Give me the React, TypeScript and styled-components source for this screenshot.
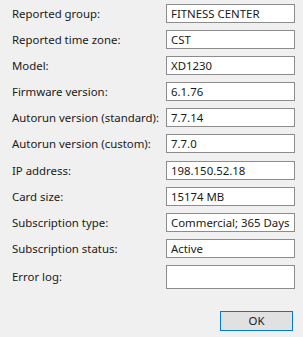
import { Fragment } from 'react';
import styled, { createGlobalStyle } from 'styled-components';

const GlobalStyle = createGlobalStyle`
  html, body {
    margin: 0;
    padding: 0;
    background: #f0f0f0;
  }
  body {
    font-family: 'Noto Sans', 'Open Sans', sans-serif;
    font-size: 11.4px;
    color: #000;
  }
`;

const Dialog = styled.div`
  width: 303px;
  height: 337px;
  box-sizing: border-box;
  padding: 4px 8px 0 12px;
  display: flex;
  flex-direction: column;
`;

const Fields = styled.div`
  display: grid;
  grid-template-columns: 154px 129px;
  row-gap: 7.1px;
`;

const Label = styled.div`
  display: flex;
  align-items: center;
  white-space: nowrap;
  color: #1a1a1a;
`;

const TextBox = styled.div<{ $tall?: boolean }>`
  box-sizing: border-box;
  height: ${(p) => (p.$tall ? '24px' : '19px')};
  border: 1px solid #8c8c8c;
  background: #fff;
  padding: 0 4px;
  display: flex;
  align-items: center;
  white-space: nowrap;
  overflow: hidden;
  color: #1a1a1a;
`;

const Footer = styled.div`
  display: flex;
  justify-content: flex-end;
  padding-top: 22px;
  padding-right: 2px;
`;

const Button = styled.button`
  box-sizing: border-box;
  width: 73px;
  height: 20px;
  border: 1px solid #0078d7;
  background: #e1e1e1;
  font-family: inherit;
  font-size: 11.4px;
  color: #1a1a1a;
  padding: 0;
`;

type Field = { label: string; value: string; tall?: boolean };

const fields: Field[] = [
  { label: 'Reported group:', value: 'FITNESS CENTER' },
  { label: 'Reported time zone:', value: 'CST' },
  { label: 'Model:', value: 'XD1230' },
  { label: 'Firmware version:', value: '6.1.76' },
  { label: 'Autorun version (standard):', value: '7.7.14' },
  { label: 'Autorun version (custom):', value: '7.7.0' },
  { label: 'IP address:', value: '198.150.52.18' },
  { label: 'Card size:', value: '15174 MB' },
  { label: 'Subscription type:', value: 'Commercial; 365 Days' },
  { label: 'Subscription status:', value: 'Active' },
  { label: 'Error log:', value: '', tall: true },
];

export default function App() {
  return (
    <>
      <GlobalStyle />
      <Dialog>
        <Fields>
          {fields.map((f) => (
            <Fragment key={f.label}>
              <Label>{f.label}</Label>
              <TextBox $tall={f.tall}>{f.value}</TextBox>
            </Fragment>
          ))}
        </Fields>
        <Footer>
          <Button>OK</Button>
        </Footer>
      </Dialog>
    </>
  );
}
